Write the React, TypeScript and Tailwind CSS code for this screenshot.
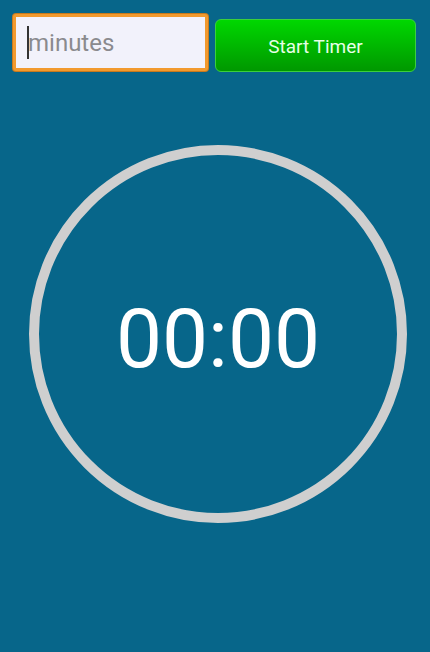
export default function App() {
  return (
    <div
      className="w-[430px] h-[652px] bg-[#07668a] overflow-hidden"
      style={{ fontFamily: "Roboto, 'Liberation Sans', sans-serif" }}
    >
      <div className="flex items-start pl-[13px] pt-[14px]">
        <div className="w-[195px] h-[57px] rounded-[3px] border-[3px] border-[#f29a2e] bg-[#f2f2fb] shadow-[0_0_0_1px_#c87a1e] flex items-center pl-[11px]">
          <span className="w-[2px] h-[33px] bg-[#333333] mr-[-1px]" />
          <span className="text-[24px] leading-none text-[#8a8a8e] pt-[1px]">minutes</span>
        </div>
        <button className="ml-[7px] mt-[5px] w-[201px] h-[53px] rounded-[6px] border border-[#3ccf3c] bg-gradient-to-b from-[#00d800] to-[#009800] text-[19px] text-[#e6ffe6] flex items-center justify-center pt-[3px]">
          Start Timer
        </button>
      </div>
      <div className="pl-[29px] pt-[73px]">
        <div className="w-[378px] h-[378px] rounded-full border-[10px] border-[#cfcfcf] flex items-center justify-center">
          <span className="text-[82px] leading-none text-white pt-[10px]">00:00</span>
        </div>
      </div>
    </div>
  );
}
